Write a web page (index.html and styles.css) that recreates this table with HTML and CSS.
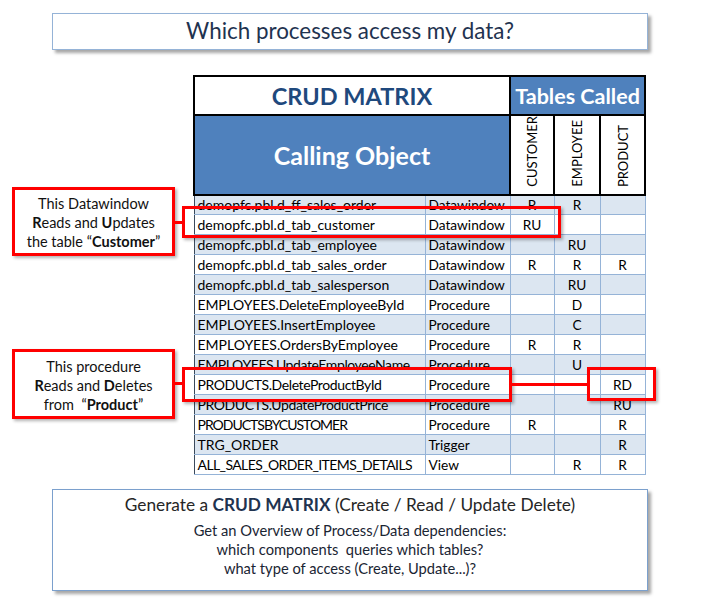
FILE: index.html
```html
<!DOCTYPE html>
<html>
<head>
<meta charset="utf-8">
<link rel="stylesheet" href="styles.css">
</head>
<body>
<div class="page">
  <div class="title-box">Which processes access my data?</div>

  <table class="matrix">
    <colgroup>
      <col class="col-name"><col class="col-type"><col class="col-cust"><col class="col-emp"><col class="col-prod">
    </colgroup>
    <thead>
      <tr class="h1">
        <th colspan="2" class="crud">CRUD MATRIX</th>
        <th colspan="3" class="tables">Tables Called</th>
      </tr>
      <tr class="h2">
        <th colspan="2" class="calling">Calling Object</th>
        <th class="vert"><span>CUSTOMER</span></th>
        <th class="vert"><span>EMPLOYEE</span></th>
        <th class="vert"><span>PRODUCT</span></th>
      </tr>
    </thead>
    <tbody>
      <tr><td>demopfc.pbl.d_ff_sales_order</td><td>Datawindow</td><td class="c">R</td><td class="c">R</td><td class="c"></td></tr>
      <tr><td>demopfc.pbl.d_tab_customer</td><td>Datawindow</td><td class="c">RU</td><td class="c"></td><td class="c"></td></tr>
      <tr><td>demopfc.pbl.d_tab_employee</td><td>Datawindow</td><td class="c"></td><td class="c">RU</td><td class="c"></td></tr>
      <tr><td>demopfc.pbl.d_tab_sales_order</td><td>Datawindow</td><td class="c">R</td><td class="c">R</td><td class="c">R</td></tr>
      <tr><td>demopfc.pbl.d_tab_salesperson</td><td>Datawindow</td><td class="c"></td><td class="c">RU</td><td class="c"></td></tr>
      <tr><td class="tight-1">EMPLOYEES.DeleteEmployeeById</td><td>Procedure</td><td class="c"></td><td class="c">D</td><td class="c"></td></tr>
      <tr><td>EMPLOYEES.InsertEmployee</td><td>Procedure</td><td class="c"></td><td class="c">C</td><td class="c"></td></tr>
      <tr><td>EMPLOYEES.OrdersByEmployee</td><td>Procedure</td><td class="c">R</td><td class="c">R</td><td class="c"></td></tr>
      <tr><td class="tight-2">EMPLOYEES.UpdateEmployeeName</td><td>Procedure</td><td class="c"></td><td class="c">U</td><td class="c"></td></tr>
      <tr><td class="tight-2">PRODUCTS.DeleteProductById</td><td>Procedure</td><td class="c"></td><td class="c"></td><td class="c">RD</td></tr>
      <tr><td class="tight-2">PRODUCTS.UpdateProductPrice</td><td>Procedure</td><td class="c"></td><td class="c"></td><td class="c">RU</td></tr>
      <tr><td class="tight-4">PRODUCTSBYCUSTOMER</td><td>Procedure</td><td class="c">R</td><td class="c"></td><td class="c">R</td></tr>
      <tr><td>TRG_ORDER</td><td>Trigger</td><td class="c"></td><td class="c"></td><td class="c">R</td></tr>
      <tr><td class="tight-3">ALL_SALES_ORDER_ITEMS_DETAILS</td><td>View</td><td class="c"></td><td class="c">R</td><td class="c">R</td></tr>
    </tbody>
  </table>

  <div class="summary">
    <div class="summary-title">Generate a <b>CRUD MATRIX</b> (Create / Read / Update Delete)</div>
    <div class="summary-text">Get an Overview of Process/Data dependencies:<br>which components&nbsp; queries which tables?<br>what type of access (Create, Update...)?</div>
  </div>

  <div class="callout callout-1">This Datawindow<br><b>R</b>eads and <b>U</b>pdates<br>the table &ldquo;<b>Customer</b>&rdquo;</div>
  <div class="link link-1"></div>
  <div class="mark mark-1"></div>

  <div class="callout callout-2">This procedure<br><b>R</b>eads and <b>D</b>eletes<br>from &nbsp;&ldquo;<b>Product</b>&rdquo;</div>
  <div class="link link-2"></div>
  <div class="mark mark-2"></div>
  <div class="link link-3"></div>
  <div class="mark mark-3"></div>
</div>
</body>
</html>
```
FILE: styles.css
```css
* { box-sizing: border-box; }
html, body { margin: 0; padding: 0; background: #fff; }
body { font-family: "Lato", "Open Sans", sans-serif; color: #000; }

.page {
  position: relative;
  width: 720px;
  height: 601px;
  padding-top: 13px;
}

.title-box {
  margin-left: 52px;
  width: 596px;
  height: 37px;
  border: 1px solid #95b3d7;
  background: #fff;
  box-shadow: 3px 3px 3px rgba(0,0,0,0.35);
  text-align: center;
  font-size: 22.4px;
  line-height: 34px;
  color: #1f3350;
}

.matrix {
  margin-top: 25px;
  margin-left: 193px;
  border-collapse: collapse;
  table-layout: fixed;
  width: 451px;
  font-size: 14px;
}
.col-name { width: 231px; }
.col-type { width: 85px; }
.col-cust { width: 44px; }
.col-emp { width: 46px; }
.col-prod { width: 45px; }

.matrix th { padding: 0; font-weight: bold; }

.h1 th { height: 39px; border: 2px solid #000; }
.crud {
  background: #fff;
  color: #1f497d;
  font-size: 23.5px;
}
.tables {
  background: #4f81bd;
  color: #fff;
  font-size: 21.5px;
}
.h2 th { height: 77px; border: 2px solid #000; }
.calling {
  background: #4f81bd;
  color: #fff;
  font-size: 25px;
}
.vert {
  background: #fff;
  vertical-align: bottom;
  font-weight: normal !important;
}
.vert span {
  display: inline-block;
  writing-mode: vertical-rl;
  transform: rotate(180deg);
  font-size: 13px;
  font-weight: normal;
  padding-top: 4px;
  line-height: 16px;
}

.matrix td {
  height: 20px;
  padding: 0 0 0 3px;
  border: 1px solid #95b3d7;
  white-space: nowrap;
  overflow: hidden;
  line-height: 18px;
}
.matrix td.tight-1 { letter-spacing: -0.15px; }
.matrix td.tight-2 { letter-spacing: -0.4px; }
.matrix td.tight-3 { letter-spacing: -0.6px; }
.matrix td.tight-4 { letter-spacing: -1px; }
.matrix td:nth-child(2) { font-size: 13.7px; }
.matrix td.c { text-align: center; padding: 0; font-size: 13.7px; }
.matrix tbody tr:nth-child(odd) td { background: #dce6f1; }
.matrix tbody tr:nth-child(even) td { background: #fff; }
.matrix tbody tr td:first-child { border-left: 1px solid #3b4a5c; }
.matrix tbody tr:first-child td { border-top: 2px solid #000; }

.summary {
  margin-top: 14px;
  margin-left: 52px;
  width: 596px;
  height: 102px;
  border: 1px solid #7ba0cd;
  background: #fff;
  box-shadow: 3px 3px 3px rgba(0,0,0,0.35);
  text-align: center;
  color: #222;
}
.summary-title {
  font-size: 17.3px;
  padding-top: 4px;
  line-height: 22px;
  color: #262626;
}
.summary-title b { color: #1f3350; }
.summary-text {
  font-size: 14.7px;
  line-height: 19px;
  padding-top: 5px;
  color: #1a2533;
}

.callout {
  position: absolute;
  left: 12px;
  width: 163px;
  border: 3px solid #f00;
  background: #fff;
  box-shadow: 2px 2px 3px rgba(0,0,0,0.3);
  text-align: center;
  font-size: 14.5px;
  line-height: 19px;
  color: #111;
}
.callout-1 { top: 187px; height: 69px; padding-top: 4px; }
.callout-2 { top: 349px; height: 70px; padding-top: 5px; }

.mark {
  position: absolute;
  border: 3px solid #f00;
  box-shadow: 2px 2px 3px rgba(0,0,0,0.3);
}
.mark-1 { left: 182px; top: 206px; width: 379px; height: 32px; }
.mark-2 { left: 182px; top: 367px; width: 330px; height: 35px; }
.mark-3 { left: 587px; top: 367px; width: 69px; height: 34px; }

.link {
  position: absolute;
  height: 3px;
  background: #f00;
}
.link-1 { left: 175px; top: 221px; width: 8px; }
.link-2 { left: 175px; top: 382px; width: 8px; }
.link-3 { left: 512px; top: 383px; width: 75px; }
```
